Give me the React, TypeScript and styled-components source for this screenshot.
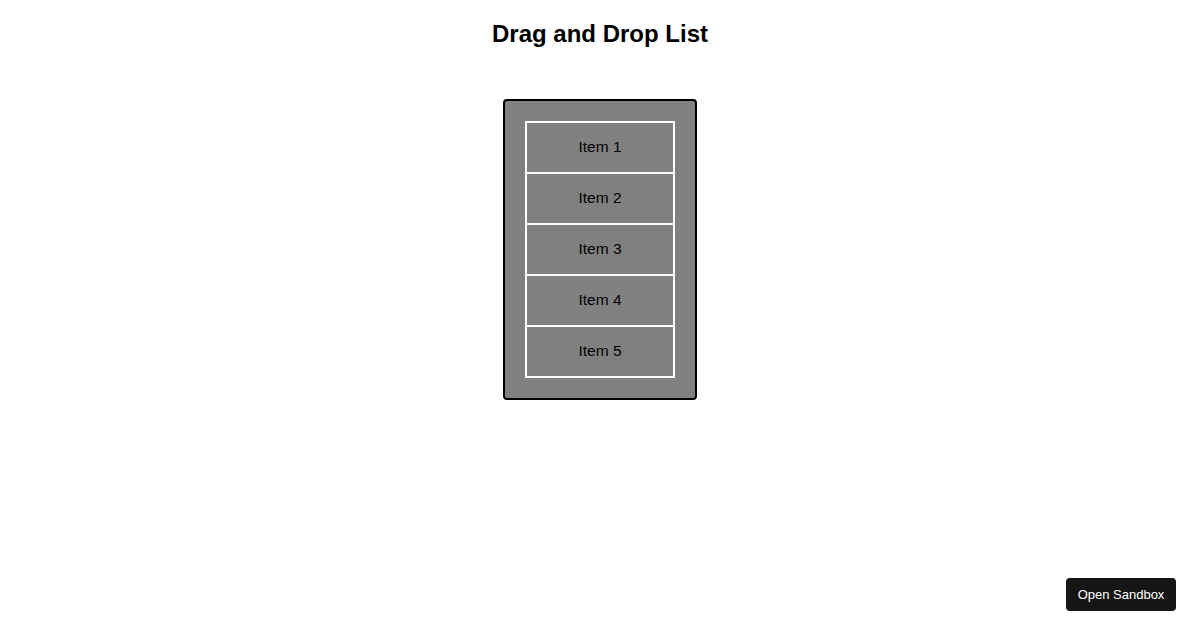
import React, { ReactElement } from "react";
import styled, { createGlobalStyle } from "styled-components";

const GlobalStyle = createGlobalStyle`
  body {
    margin: 0;
    background: #fff;
    font-family: "Liberation Sans", Arial, sans-serif;
  }
`;

const items = ["Item 1", "Item 2", "Item 3", "Item 4", "Item 5"];

function App(): ReactElement {
  return (
    <>
      <GlobalStyle />
      <Styled.Page>
        <Styled.Title>Drag and Drop List</Styled.Title>
        <Styled.Board>
          <Styled.List>
            {items.map((item) => (
              <Styled.Item key={item}>{item}</Styled.Item>
            ))}
          </Styled.List>
        </Styled.Board>
      </Styled.Page>
      <Styled.SandboxButton>Open Sandbox</Styled.SandboxButton>
    </>
  );
}

const Styled = {
  Page: styled.div`
    display: flex;
    flex-direction: column;
    align-items: center;
    padding-top: 20px;
  `,
  Title: styled.h1`
    margin: 0;
    font-size: 24px;
    line-height: 28px;
    font-weight: bold;
    color: #000;
  `,
  Board: styled.div`
    margin-top: 51px;
    width: 150px;
    padding: 20px;
    background: #808080;
    border: 2px solid #000;
    border-radius: 4px;
  `,
  List: styled.div`
    display: flex;
    flex-direction: column;
    border-top: 2px solid #fff;
  `,
  Item: styled.div`
    box-sizing: border-box;
    height: 51px;
    padding-bottom: 2px;
    display: flex;
    align-items: center;
    justify-content: center;
    border: 2px solid #fff;
    border-top: 0;
    font-size: 15.5px;
    color: #000;
    cursor: grab;
  `,
  SandboxButton: styled.button`
    position: fixed;
    right: 24px;
    bottom: 19px;
    width: 110px;
    height: 33px;
    border: 0;
    border-radius: 4px;
    background: #151515;
    color: #fff;
    font-family: "Liberation Sans", Arial, sans-serif;
    font-size: 13px;
    cursor: pointer;
  `
};

export default App;
